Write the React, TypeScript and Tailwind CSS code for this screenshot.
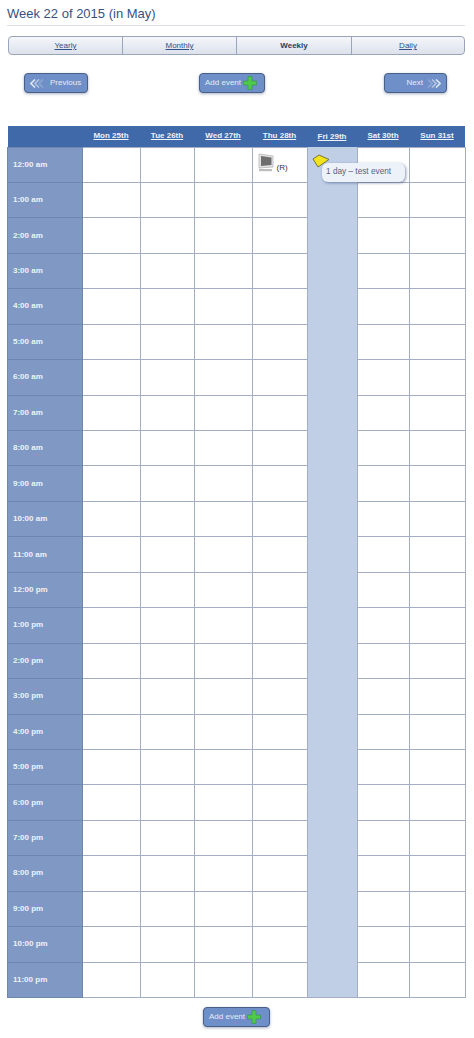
import type { ReactNode } from "react";

const HOURS = [
  "12:00 am", "1:00 am", "2:00 am", "3:00 am", "4:00 am", "5:00 am", "6:00 am", "7:00 am",
  "8:00 am", "9:00 am", "10:00 am", "11:00 am", "12:00 pm", "1:00 pm", "2:00 pm", "3:00 pm",
  "4:00 pm", "5:00 pm", "6:00 pm", "7:00 pm", "8:00 pm", "9:00 pm", "10:00 pm", "11:00 pm",
];

const DAYS = ["Mon 25th", "Tue 26th", "Wed 27th", "Thu 28th", "Fri 29th", "Sat 30th", "Sun 31st"];

const TABS = ["Yearly", "Monthly", "Weekly", "Daily"];

function PlusIcon() {
  return (
    <svg width="16" height="16" viewBox="0 0 16 16" className="shrink-0">
      <path
        d="M6 1.5h4v4.5h4.5v4H10v4.5H6V10H1.5V6H6z"
        fill="#4fc94a"
        stroke="#3a9a57"
        strokeWidth="0.8"
        strokeLinejoin="round"
      />
    </svg>
  );
}

function Chevrons({ flip }: { flip?: boolean }) {
  return (
    <svg width="15" height="9" viewBox="0 0 15 9" className={flip ? "shrink-0 rotate-180" : "shrink-0"}>
      <path d="M5 .5 1 4.5l4 4" fill="none" stroke="#dfe7f4" strokeWidth="1.6" />
      <path d="M9 .5 5 4.5l4 4" fill="none" stroke="#b4c5e2" strokeWidth="1.6" />
      <path d="M13 .5 9 4.5l4 4" fill="none" stroke="#8fa8d2" strokeWidth="1.6" />
    </svg>
  );
}

function NavButton({ children, className }: { children: ReactNode; className: string }) {
  return (
    <div
      className={`flex h-[20px] items-center rounded-[4px] border border-[#4a5f86] bg-[#6f8fc8] text-[8px] text-[#e6ecf6] shadow-[0_1px_3px_rgba(60,80,120,0.45)] ${className}`}
    >
      {children}
    </div>
  );
}

function MonitorIcon() {
  return (
    <svg width="17" height="19" viewBox="0 0 17 19" className="absolute left-[5px] top-[5px]">
      <path d="M1 1 15 3v11L1 15z" fill="#e4e4e4" stroke="#b5b5b5" strokeWidth="0.8" />
      <path d="M3 3 13.5 4.5v7.5L3 13z" fill="#6e6e6e" />
      <path d="M1 16h13v2.2H1z" fill="#bdbdbd" />
    </svg>
  );
}

function TagIcon() {
  return (
    <svg width="18" height="14" viewBox="0 0 18 14" className="absolute left-[4px] top-[7px]">
      <path d="M1 5 7 1l10 4.5L6 13z" fill="#f2e41c" stroke="#6f6a2a" strokeWidth="0.9" strokeLinejoin="round" />
    </svg>
  );
}

export default function App() {
  return (
    <div className="relative h-[1038px] w-[474px] overflow-hidden bg-white font-['Liberation_Sans',Arial,sans-serif]">
      <h1 className="ml-[7px] mr-[9px] h-[26px] border-b border-[#dcdfe9] pt-[6px] text-[13px] leading-[16px] text-[#37527f]">
        Week 22 of 2015 (in May)
      </h1>

      {/* view switcher */}
      <div className="ml-[8px] mt-[10px] grid h-[19px] w-[457px] grid-cols-[114px_114px_115px_1fr] rounded-[4px] border border-[#9aa5ba] bg-gradient-to-b from-[#f4f6fa] to-[#dce1eb] text-[8px] leading-[17px]">
        {TABS.map((tab, i) => (
          <div
            key={tab}
            className={`text-center ${i < 3 ? "border-r border-[#9aa5ba]" : ""} ${
              tab === "Weekly" ? "font-bold text-[#2c3e5e]" : "text-[#34508a] underline"
            }`}
          >
            {tab}
          </div>
        ))}
      </div>

      {/* prev / add / next */}
      <div className="ml-[24px] mt-[18px] flex">
        <NavButton className="w-[64px] pl-[5px]">
          <Chevrons />
          <span className="ml-[5px]">Previous</span>
        </NavButton>
        <NavButton className="ml-[111px] w-[66px] pl-[5px]">
          <span>Add event</span>
          <span className="ml-[1px]"><PlusIcon /></span>
        </NavButton>
        <NavButton className="ml-[119px] w-[63px] justify-end pr-[5px]">
          <span className="mr-[3px]">Next</span>
          <Chevrons flip />
        </NavButton>
      </div>

      {/* week grid */}
      <table className="ml-[7px] mt-[33px] w-[457.5px] table-fixed border-collapse text-[8px]">
        <colgroup>
          <col className="w-[74.5px]" />
          <col className="w-[58px]" />
          <col className="w-[54px]" />
          <col className="w-[58px]" />
          <col className="w-[55px]" />
          <col className="w-[50px]" />
          <col className="w-[52px]" />
          <col className="w-[56px]" />
        </colgroup>
        <thead>
          <tr className="h-[21px] bg-[#3f69a9] text-[#eef2f9]">
            <th className="p-0" />
            {DAYS.map((day) => (
              <th key={day} className="p-0 text-center font-bold underline">
                {day}
              </th>
            ))}
          </tr>
        </thead>
        <tbody className="border-b border-[#a3aec5]">
          {HOURS.map((hour, rowIdx) => (
            <tr key={hour} className="h-[35.45px]">
              <td className="border border-[#6f87ae] bg-[#7f99c4] p-0 pl-[5px] text-left font-bold text-[#eef2f9]">
                {hour}
              </td>
              {DAYS.map((day) => (
                <td
                  key={day}
                  className={`relative p-0 ${
                    day === "Fri 29th"
                      ? "border-x border-x-[#a3aec5] bg-[#c0cfe6]"
                      : "border border-[#a3aec5]"
                  }`}
                >
                  {rowIdx === 0 && day === "Thu 28th" && (
                    <>
                      <MonitorIcon />
                      <span className="absolute left-[24px] top-[15px] text-[8px] leading-[10px] text-[#333]">(R)</span>
                    </>
                  )}
                  {rowIdx === 0 && day === "Fri 29th" && <TagIcon />}
                </td>
              ))}
            </tr>
          ))}
        </tbody>
      </table>

      {/* event tooltip */}
      <div className="absolute left-[322px] top-[163px] flex h-[19px] w-[83px] items-center rounded-[6px] bg-[#edf1f8] pl-[4px] text-[8.25px] text-[#55637f] shadow-[1px_1px_3px_rgba(60,80,120,0.6)]">
        1 day – test event
      </div>

      <div className="ml-[203px] mt-[9px]">
        <NavButton className="w-[67px] pl-[5px]">
          <span>Add event</span>
          <span className="ml-[1px]"><PlusIcon /></span>
        </NavButton>
      </div>
    </div>
  );
}
